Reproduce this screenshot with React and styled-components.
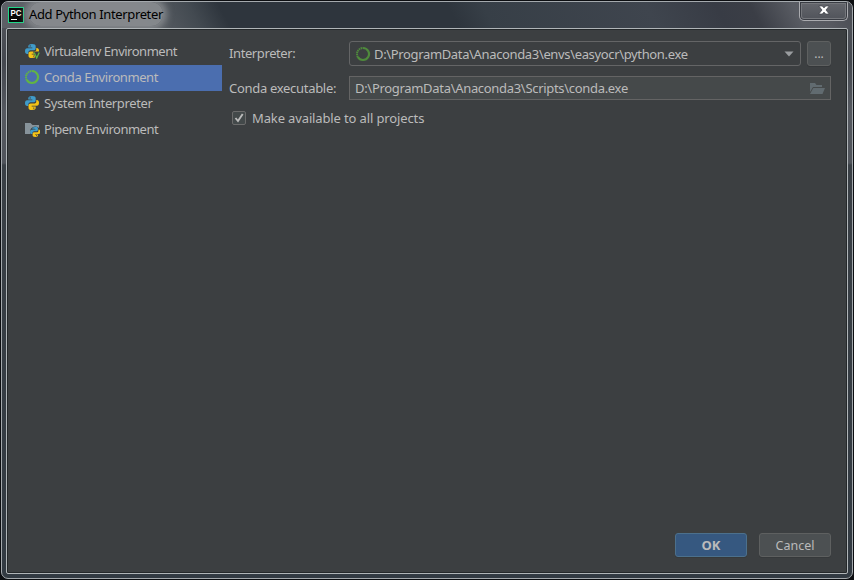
import React, { useState } from 'react';
import styled, { createGlobalStyle } from 'styled-components';

const GlobalStyle = createGlobalStyle`
  * {
    box-sizing: border-box;
  }

  body {
    margin: 0;
    background: #0c0e11;
    font-family: 'Noto Sans', 'Open Sans', sans-serif;
    font-size: 13px;
    color: #bbbbbb;
    overflow: hidden;
  }
`;

const Window = styled.div`
  display: flex;
  flex-direction: column;
  width: 852px;
  height: 578px;
  margin: 1px 0 0 1px;
  padding: 0 4px 4px;
  border: 1px solid #a4a9ad;
  border-radius: 7px;
  background: linear-gradient(180deg, #55585e 0, #44484f 60px, #555960 110px, #50545b 161px, #3a4046 163px, #323a42 100%);
`;

const TitleBar = styled.div`
  display: flex;
  flex: none;
  align-items: flex-start;
  height: 26px;
  margin: 0 -4px;
  padding-left: 6px;
  border-radius: 6px 6px 0 0;
  overflow: hidden;
  background: linear-gradient(62deg, #5c5f65 0, #5c6066 17%, #434a51 23%, #2e353d 26.500%, #2e353d 53%, #373f47 57%, #3f454e 76%, #383c45 84%, #3b3e46 88%, #595c63 93%, #585a61 96%, #484b52 100%);
`;

const Title = styled.div`
  flex: 1;
  padding-left: 5px;
  color: #000000;
  line-height: 24px;
  letter-spacing: -0.36px;

  span {
    display: inline-block;
    height: 24px;
    border-radius: 12px;
    background: rgba(140, 143, 147, 0.85);
    box-shadow: 0 0 7px 4px rgba(140, 143, 147, 0.85);
  }
`;

const CloseButton = styled.button`
  display: flex;
  align-items: center;
  justify-content: center;
  width: 49px;
  height: 19px;
  margin-right: 4px;
  padding: 0 0 2px 1px;
  border: 1px solid #aaabaf;
  border-top: 0;
  border-radius: 0 0 5px 5px;
  background: linear-gradient(#65676d, #50535a);
  box-shadow: inset 0 0 0 1px #393c43, inset 0 0 0 2px #75777c;
`;

const Content = styled.div`
  display: flex;
  flex: 1;
  flex-direction: column;
  border: 1px solid #b0b5b8;
  border-radius: 2px;
  box-shadow: inset 0 0 0 1px #24282a;
  background: #3c3f41;
`;

const Main = styled.div`
  display: flex;
  flex: 1;
  padding: 10px 16px 0 13px;
`;

const Sidebar = styled.div`
  width: 202px;
  flex: none;
`;

const SidebarItem = styled.div`
  display: flex;
  align-items: center;
  gap: 4px;
  height: 26px;
  padding: 0 0 2px 4px;
  background: ${(props) => (props.$selected ? '#4b6eaf' : 'transparent')};
  letter-spacing: ${(props) => props.$spacing}px;
  white-space: nowrap;
`;

const Form = styled.div`
  flex: 1;
  padding: 2px 0 0 7px;
`;

const FormRow = styled.div`
  display: flex;
  align-items: flex-start;
  height: 25px;
  margin-bottom: 10px;
`;

const Label = styled.label`
  width: 120px;
  flex: none;
  line-height: 24px;
  letter-spacing: ${(props) => props.$spacing}px;
  white-space: nowrap;
`;

const ComboBox = styled.div`
  display: flex;
  flex: 1;
  align-items: center;
  height: 25px;
  padding: 0 6px 0 5px;
  border: 1px solid #646566;
  border-radius: 3px;
  letter-spacing: -0.35px;

  span {
    flex: 1;
    padding-left: 3px;
  }
`;

const BrowseButton = styled.button`
  width: 24px;
  height: 25px;
  margin-left: 6px;
  padding: 0;
  border: 1px solid #5e6060;
  border-radius: 3px;
  background: #4c5052;
  box-shadow: 0 1px 0 #35383a;
  color: #bbbbbb;
  font: inherit;
  font-size: 12px;
`;

const PathField = styled.div`
  display: flex;
  flex: 1;
  align-items: center;
  justify-content: space-between;
  height: 24px;
  padding: 0 5px;
  border: 1px solid #646464;
  background: #45494a;
  letter-spacing: -0.31px;
`;

const CheckRow = styled.div`
  display: flex;
  align-items: center;
  gap: 6px;
  height: 14px;
  padding-left: 3px;
  letter-spacing: -0.13px;
`;

const CheckBox = styled.div`
  display: flex;
  width: 14px;
  height: 14px;
  border: 1px solid #6b6b6b;
  border-radius: 2px;
  background: #43494a;
`;

const Footer = styled.div`
  display: flex;
  flex: none;
  justify-content: flex-end;
  gap: 12px;
  padding: 0 16px 16px;
`;

const Button = styled.button`
  width: 72px;
  height: 24px;
  padding: 0;
  border: 1px solid ${(props) => (props.$primary ? '#4c708c' : '#5e6060')};
  border-radius: 3px;
  background: ${(props) => (props.$primary ? '#365880' : '#4c5052')};
  box-shadow: 0 1px 0 #36393b;
  color: #bbbbbb;
  font-family: inherit;
  font-size: ${(props) => (props.$primary ? 13 : 12.5)}px;
  font-weight: ${(props) => (props.$primary ? 700 : 400)};
`;

const PyCharmSvg = styled.svg`
  flex: none;
  margin-top: 5px;
`;

const PyCharmIcon = () => (
  <PyCharmSvg width="16" height="16" viewBox="0 0 16 16">
    <rect width="16" height="16" fill="#21d789" />
    <rect x="1" y="1" width="14" height="14" fill="#080808" />
    <text x="2.5" y="8.6" fill="#fff" fontSize="8.500" fontWeight="700" fontFamily="Liberation Sans, sans-serif" textLength="11" lengthAdjust="spacingAndGlyphs">PC</text>
    <rect x="3" y="12" width="6" height="1" fill="#fff" />
  </PyCharmSvg>
);

const PythonShape = () => (
  <>
    <path fill="#3f9bc9" d="M8 1C5.200 1 4.300 2 4.300 3.300V4.500h4v.7H3.200C1.700 5.200 1 6.500 1 8.200c0 1.800.9 2.800 2.200 2.800h1.100V9.600c0-1.300 1-2.300 2.300-2.300h3c1.200 0 2.100-.9 2.100-2.100V3.300C11.700 1.900 10.600 1 8 1zM6.200 2.200a.7.700 0 1 1 0 1.400.7.700 0 0 1 0-1.400z" />
    <path fill="#f4c316" d="M8 15c2.800 0 3.700-1 3.700-2.300v-1.200h-4v-.7h5.100C14.300 10.800 15 9.500 15 7.800 15 6 14.100 5 12.800 5h-.5v1.400c0 1.300-1 2.100-2.300 2.100H6.600c-1.200 0-2.100.9-2.100 2.100v2.100C4.500 14.100 5.400 15 8 15zm1.800-1.200a.7.700 0 1 1 0-1.400.7.700 0 0 1 0 1.400z" />
  </>
);

const PythonIcon = () => (
  <svg width="16" height="16" viewBox="0 0 16 16">
    <PythonShape />
  </svg>
);

const VirtualenvIcon = () => (
  <svg width="16" height="16" viewBox="0 0 16 16">
    <PythonShape />
    <path d="M9 8.500h7V16h-4z" fill="#3c3f41" />
    <path d="M10.200 9.500 12.700 15l2.500-5.500" fill="none" stroke="#62b543" strokeWidth="1.300" />
  </svg>
);

const PipenvIcon = () => (
  <svg width="16" height="16" viewBox="0 0 16 16">
    <path d="M1 2h5.500l2 2H15v9H1z" fill="#87939a" />
    <circle cx="11.300" cy="10.800" r="5.300" fill="#3c3f41" />
    <g transform="translate(5.300 4.900) scale(.74)">
      <PythonShape />
    </g>
  </svg>
);

const CondaIcon = ({ color = '#62b543' }) => (
  <svg width="16" height="16" viewBox="0 0 16 16">
    <path d="M8 2a6 6 0 1 1-5.200 9" fill="none" stroke={color} strokeWidth="2.200" />
    <path d="M2.800 11A6 6 0 0 1 8 2" fill="none" stroke={color} strokeWidth="2" strokeDasharray="1.400 .6" />
  </svg>
);

const environments = [
  { name: 'Virtualenv Environment', icon: <VirtualenvIcon />, spacing: -0.49 },
  { name: 'Conda Environment', icon: <CondaIcon />, spacing: -0.43 },
  { name: 'System Interpreter', icon: <PythonIcon />, spacing: -0.38 },
  { name: 'Pipenv Environment', icon: <PipenvIcon />, spacing: -0.49 },
];

const App = () => {
  const [selected, setSelected] = useState('Conda Environment');
  const [shared, setShared] = useState(true);

  return (
    <>
      <GlobalStyle />
      <Window>
        <TitleBar>
          <PyCharmIcon />
          <Title>
            <span>Add Python Interpreter</span>
          </Title>
          <CloseButton aria-label="Close">
            <svg width="12" height="10" viewBox="0 0 12 10">
              <path d="M.8 1h3.500L6 2.900 7.700 1h3.500L8 5l3.200 4H7.700L6 7.100 4.300 9H.8L4 5z" fill="#fff" stroke="#3e4147" strokeWidth=".7" />
            </svg>
          </CloseButton>
        </TitleBar>
        <Content>
          <Main>
            <Sidebar>
              {environments.map((env) => (
                <SidebarItem
                  key={env.name}
                  $selected={env.name === selected}
                  $spacing={env.spacing}
                  onClick={() => setSelected(env.name)}
                >
                  {env.icon}
                  <span>{env.name}</span>
                </SidebarItem>
              ))}
            </Sidebar>
            <Form>
              <FormRow>
                <Label $spacing={-0.4}>Interpreter:</Label>
                <ComboBox>
                  <CondaIcon color="#4f8a3c" />
                  <span>D:\ProgramData\Anaconda3\envs\easyocr\python.exe</span>
                  <svg width="10" height="6" viewBox="0 0 10 6">
                    <path d="M.5.500h9L5 5.500z" fill="#9a9da0" />
                  </svg>
                </ComboBox>
                <BrowseButton>...</BrowseButton>
              </FormRow>
              <FormRow>
                <Label $spacing={-0.3}>Conda executable:</Label>
                <PathField>
                  <span>D:\ProgramData\Anaconda3\Scripts\conda.exe</span>
                  <svg width="16" height="16" viewBox="0 0 16 16">
                    <path d="M1 3h5l1.500 2H13v2H4L1 12z" fill="#616b70" />
                    <path d="M4.300 8H16l-2.500 6H1z" fill="#616b70" />
                  </svg>
                </PathField>
              </FormRow>
              <CheckRow onClick={() => setShared(!shared)}>
                <CheckBox>
                  {shared && (
                    <svg width="12" height="12" viewBox="0 0 12 12">
                      <path d="M2.500 6 5 9l4.700-7" fill="none" stroke="#bbbbbb" strokeWidth="1.900" />
                    </svg>
                  )}
                </CheckBox>
                <span>Make available to all projects</span>
              </CheckRow>
            </Form>
          </Main>
          <Footer>
            <Button $primary>OK</Button>
            <Button>Cancel</Button>
          </Footer>
        </Content>
      </Window>
    </>
  );
};

export default App;
